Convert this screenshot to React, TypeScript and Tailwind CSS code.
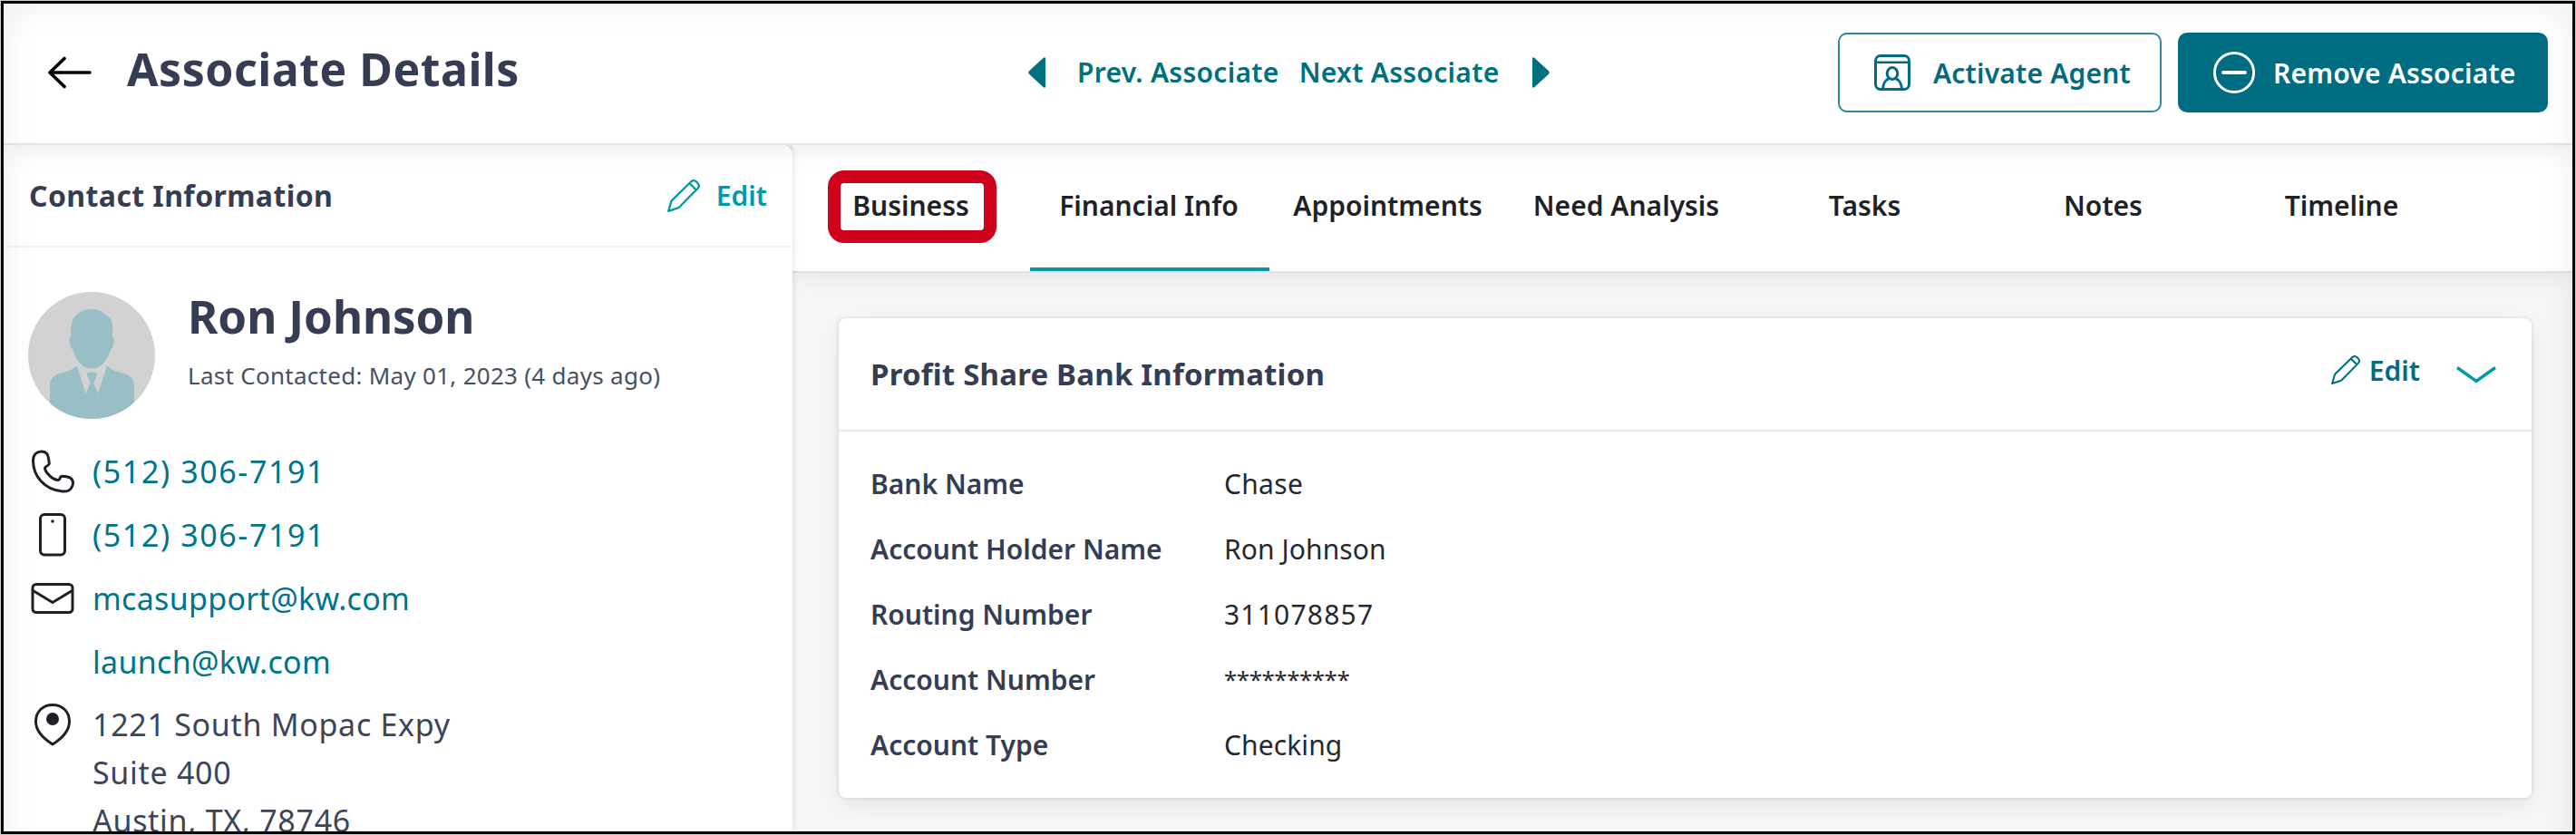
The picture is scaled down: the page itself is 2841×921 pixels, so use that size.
import type { ReactNode } from "react";

const tabs = ["Business", "Financial Info", "Appointments", "Need Analysis", "Tasks", "Notes", "Timeline"];

const bankRows = [
  { label: "Bank Name", value: "Chase", style: "tracking-[0.3px]" },
  { label: "Account Holder Name", value: "Ron Johnson", style: "tracking-[0.1px]" },
  { label: "Routing Number", value: "311078857", style: "tracking-[1.2px]" },
  { label: "Account Number", value: "**********", style: "text-[26px] tracking-[-0.5px]" },
  { label: "Account Type", value: "Checking", style: "tracking-[0.1px]" },
];

function PencilIcon({ className }: { className: string }) {
  return (
    <svg viewBox="0 0 36 36" className={className} fill="none" stroke="currentColor" strokeWidth="2.3" strokeLinejoin="round">
      <path d="M1.2 34.8 4.6 23.4 26.3 2.3Q29 0 31.9 2.3L33.8 4.4Q36 7 33.7 9.7L12.4 31.2Z" />
      <path d="M24.6 4.2 32 11.6" />
    </svg>
  );
}

function BackArrow() {
  return (
    <svg viewBox="0 0 48 36" className="h-9 w-12" fill="none" stroke="#000" strokeWidth="3.6" strokeLinecap="round" strokeLinejoin="round">
      <path d="M46 18H2.5M18 2.5 2 18 18 33.5" />
    </svg>
  );
}

function AgentIcon() {
  return (
    <svg viewBox="0 0 40 40" className="h-10 w-10" fill="none" stroke="currentColor" strokeWidth="3">
      <rect x="1.5" y="1.5" width="37" height="37" rx="5.5" />
      <path d="M2 8.7H38" strokeWidth="2.6" />
      <ellipse cx="20" cy="21" rx="5.8" ry="6.5" />
      <path d="M9.5 38C10 31 13.5 27.5 16.5 26.8M30.5 38C30 31 26.5 27.5 23.5 26.8" />
    </svg>
  );
}

function MinusCircle() {
  return (
    <svg viewBox="0 0 48 48" className="size-12" fill="none" stroke="currentColor" strokeWidth="3">
      <circle cx="24" cy="24" r="21.6" />
      <path d="M12 24H36" strokeWidth="4" strokeLinecap="round" />
    </svg>
  );
}

function Avatar() {
  return (
    <svg viewBox="0 0 140 140" className="size-[140px] shrink-0">
      <defs>
        <clipPath id="avatar-circle">
          <circle cx="70" cy="70" r="70" />
        </clipPath>
      </defs>
      <g clipPath="url(#avatar-circle)">
        <rect width="140" height="140" fill="#d2d2d2" />
        <g fill="#98bfc6">
          <path d="M47.5 49C45 28 56 19 70 19C78 19 83 22 86 26C93 28 94.5 37 92.5 49C96 50 95 58 92 63C90 64.5 90 66 89 69C85 79 78 84.5 70 84.5C62 84.5 55 79 51 69C50 66 50 64.5 48.5 63C45 58 44.5 50 47.5 49Z" />
          <path d="M24 140V104C24 96 28 92 35 90C43 88 48 86 54 81.5L63.5 112L69 101L65 92Q64 88.5 70 88.5Q77 88.5 76 92L72 101L77 112L87 81.5C92 86 98 88 106 90C113 92 117 96 117 104V140Z" />
          <path d="M64 112 68.5 101H72.5L77 112V118H64Z" />
        </g>
      </g>
    </svg>
  );
}

function PhoneIcon() {
  return (
    <svg viewBox="0 0 48 48" className="size-12" fill="none" stroke="currentColor" strokeWidth="3" strokeLinejoin="round">
      <path d="M2.5 12C2.5 5 7 2 12 2C17 2 19 5.500 19.500 9.500L20.300 15C20.500 18 15.500 18 15.500 20.500C16 25 24 33.500 30 33.500C33 33.500 31 29.500 34.500 29.300C38.500 29.500 42 30 44 31.500C47.500 34 47 39 44.500 42.500C42.500 45.500 39.500 46.300 35 46C15 44.500 2.500 29 2.500 12Z" />
    </svg>
  );
}

function MobileIcon() {
  return (
    <svg viewBox="0 0 48 48" className="size-12" fill="none" stroke="currentColor" strokeWidth="3">
      <rect x="10.5" y="1.5" width="27" height="44.5" rx="4.5" />
      <circle cx="24" cy="9" r="1.8" fill="currentColor" stroke="none" />
    </svg>
  );
}

function MailIcon() {
  return (
    <svg viewBox="0 0 48 48" className="size-12" fill="none" stroke="currentColor" strokeWidth="3" strokeLinejoin="round">
      <rect x="2" y="8.5" width="44" height="31" rx="4" />
      <path d="M2.5 15.5 24 28.5 45.5 15.5" />
    </svg>
  );
}

function PinIcon() {
  return (
    <svg viewBox="0 0 48 48" className="size-12" fill="none" stroke="currentColor" strokeWidth="3" strokeLinejoin="round">
      <path d="M24 46C13 39 5.5 30 5.5 21C5.5 9 14 2.5 24 2.5S42.5 9 42.5 21C42.5 30 35 39 24 46Z" />
      <circle cx="24" cy="18" r="7" fill="currentColor" stroke="none" />
    </svg>
  );
}

function ContactRow({ icon, children }: { icon?: ReactNode; children: ReactNode }) {
  return (
    <div className="flex h-[70px] items-center gap-5">
      <span className="size-12 shrink-0 text-[#1d2127]">{icon}</span>
      {children}
    </div>
  );
}

export default function App() {
  return (
    <div className="h-[921px] w-[2841px] bg-[#c9cfcc] p-px font-['Noto_Sans',sans-serif]">
      <div className="relative flex h-full flex-col overflow-hidden border-[3px] border-black bg-[#f7f7f7]">
        <header className="relative z-10 flex h-[156px] shrink-0 items-start justify-between border-b-2 border-[#e6e6e6] bg-white pr-[27px] pl-[49px] shadow-[0_4px_28px_rgba(0,0,0,0.08)]">
          <div className="flex w-[1081px] items-center gap-[39px] pt-[46px]">
            <div className="pt-2">
              <BackArrow />
            </div>
            <h1 className="text-[50px] leading-[52px] font-bold tracking-[0.5px] text-[#343d52]">Associate Details</h1>
          </div>
          <nav className="flex h-[151px] flex-1 items-center gap-[22px] text-[30px] font-semibold tracking-[0.3px] text-[#00707c]">
            <a className="flex items-center gap-[35px]">
              <svg viewBox="0 0 19 34" className="h-[34px] w-[19px]" fill="currentColor">
                <path d="M19 1V33Q18 34.5 16.5 33L.8 18.5Q0 17 .8 15.5L16.5 1Q18-.5 19 1Z" />
              </svg>
              Prev. Associate
            </a>
            <a className="flex items-center gap-[36px]">
              Next Associate
              <svg viewBox="0 0 19 34" className="h-[34px] w-[19px]" fill="currentColor">
                <path d="M0 1V33Q1 34.5 2.5 33L18.2 18.5Q19 17 18.2 15.5L2.5 1Q1-.5 0 1Z" />
              </svg>
            </a>
          </nav>
          <div className="flex gap-[18px] pt-8 text-[30px] font-semibold tracking-[0.2px]">
            <button className="flex h-[88px] w-[357px] items-center gap-[25px] rounded-[10px] border-2 border-[#2f8998] bg-white pl-[38px] text-[#006c82]">
              <AgentIcon />
              <span>Activate Agent</span>
            </button>
            <button className="flex h-[88px] w-[408px] items-center gap-[19px] rounded-[10px] bg-[#006c82] pl-[38px] text-white">
              <MinusCircle />
              <span>Remove Associate</span>
            </button>
          </div>
        </header>

        <div className="flex min-h-0 flex-1">
          <aside className="relative z-[5] w-[870px] shrink-0 overflow-hidden rounded-tr-[10px] bg-white shadow-[0_0_8px_rgba(0,0,0,0.14)]">
            <div className="flex h-[113px] items-center justify-between border-b-2 border-[#f5f5f5] pr-7 pl-7">
              <h2 className="text-[32px] font-bold tracking-[0.4px] text-[#343d52]">Contact Information</h2>
              <a className="flex items-center gap-[18px] text-[30px] font-semibold text-[#0099a8]">
                <PencilIcon className="size-9" />
                Edit
              </a>
            </div>
            <div className="flex items-center gap-9 pt-[49px] pl-[27px]">
              <Avatar />
              <div className="flex h-[140px] flex-col">
                <p className="text-[51px] leading-[52px] font-bold tracking-[-0.1px] text-[#343d52]">Ron Johnson</p>
                <p className="pt-[21px] text-[26px] tracking-[0.28px] text-[#475063]">Last Contacted: May 01, 2023 (4 days ago)</p>
              </div>
            </div>
            <div className="pt-[23px] pl-[30px] text-[34px] text-[#007489]">
              <ContactRow icon={<PhoneIcon />}>
                <a className="tracking-[1.6px]">(512) 306-7191</a>
              </ContactRow>
              <ContactRow icon={<MobileIcon />}>
                <a className="tracking-[1.6px]">(512) 306-7191</a>
              </ContactRow>
              <ContactRow icon={<MailIcon />}>
                <a className="tracking-[0.3px]">mcasupport@kw.com</a>
              </ContactRow>
              <ContactRow>
                <a className="tracking-[0.3px]">launch@kw.com</a>
              </ContactRow>
              <div className="flex gap-5">
                <span className="mt-[10px] size-12 shrink-0 text-[#1d2127]">
                  <PinIcon />
                </span>
                <address className="pt-2 leading-[53px] tracking-[0.7px] text-[#3c4558] not-italic">
                  <p>1221 South Mopac Expy</p>
                  <p>Suite 400</p>
                  <p>Austin, TX, 78746</p>
                </address>
              </div>
            </div>
          </aside>

          <main className="flex min-w-0 flex-1 flex-col">
            <div className="flex h-[141px] shrink-0 border-b-2 border-[#e2e2e2] bg-white shadow-[0_4px_26px_rgba(0,0,0,0.08)]">
              {tabs.map((tab) => (
                <div
                  key={tab}
                  className={
                    tab === "Financial Info"
                      ? "-ml-px flex w-[264px] justify-center border-b-4 border-[#0497a5] pt-[46px]"
                      : "relative flex w-[263px] justify-center pt-[46px]"
                  }
                >
                  <span className="pr-0.5 text-[30px] leading-[42px] font-semibold text-[#1d2228]">{tab}</span>
                  {tab === "Business" && (
                    <span className="absolute top-[28px] left-[39px] h-[80px] w-[186px] rounded-[18px] border-[14px] border-[#cf001c]" />
                  )}
                </div>
              ))}
            </div>
            <section className="mt-[50px] mr-[45px] ml-[51px] h-[529px] shrink-0 rounded-lg bg-white shadow-[0_0_4px_rgba(0,0,0,0.14),0_8px_28px_rgba(0,0,0,0.08)]">
              <div className="flex h-[125px] items-center justify-between border-b-2 border-[#e9e9e9] pr-[39px] pl-[35px]">
                <h2 className="text-[33px] font-bold tracking-[0.2px] text-[#343d52]">Profit Share Bank Information</h2>
                <div className="flex items-center gap-10">
                  <a className="flex items-center gap-2.5 pb-[9px] text-[30px] font-semibold text-[#006c82]">
                    <PencilIcon className="size-8" />
                    Edit
                  </a>
                  <svg viewBox="0 0 44 20" className="h-5 w-11" fill="none" stroke="#0099a8" strokeWidth="3.4">
                    <path d="M1 2.5 22 17.5 43 2.5" />
                  </svg>
                </div>
              </div>
              <dl className="pt-[21px] pl-[35px] text-[30px]">
                {bankRows.map((row) => (
                  <div key={row.label} className="grid h-[72px] grid-cols-[390px_1fr] items-center">
                    <dt className="font-semibold text-[#343d52]">{row.label}</dt>
                    <dd className={"text-[#25292e] " + row.style}>{row.value}</dd>
                  </div>
                ))}
              </dl>
            </section>
          </main>
        </div>
        <div className="pointer-events-none absolute inset-x-0 top-0 -bottom-10 z-20 shadow-[inset_0_0_40px_rgba(0,0,0,0.08)]" />
      </div>
    </div>
  );
}
